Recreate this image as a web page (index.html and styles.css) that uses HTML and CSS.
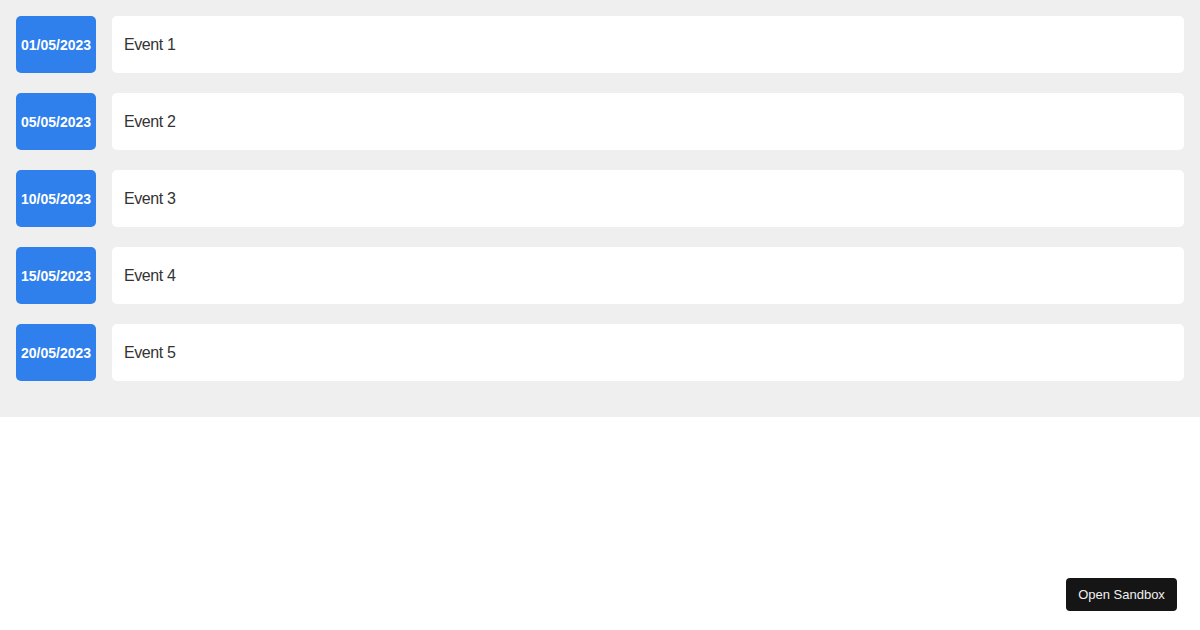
FILE: index.html
```html
<!DOCTYPE html>
<html>
<head>
<meta charset="utf-8">
<link rel="stylesheet" href="styles.css">
</head>
<body>
<div class="timeline">
  <div class="row"><div class="date">01/05/2023</div><div class="card">Event 1</div></div>
  <div class="row"><div class="date">05/05/2023</div><div class="card">Event 2</div></div>
  <div class="row"><div class="date">10/05/2023</div><div class="card">Event 3</div></div>
  <div class="row"><div class="date">15/05/2023</div><div class="card">Event 4</div></div>
  <div class="row"><div class="date">20/05/2023</div><div class="card">Event 5</div></div>
</div>
<a class="sandbox">Open Sandbox</a>
</body>
</html>
```
FILE: styles.css
```css
html, body {
  margin: 0;
  padding: 0;
  background: #ffffff;
  font-family: "Liberation Sans", Arial, sans-serif;
}
.timeline {
  background: #efefef;
  padding: 16px;
}
.row {
  display: flex;
  align-items: stretch;
  margin-bottom: 20px;
  height: 57px;
}
.date {
  width: 80px;
  flex: 0 0 80px;
  background: #2f80ed;
  color: #ffffff;
  font-weight: bold;
  font-size: 14px;
  border-radius: 5px;
  display: flex;
  align-items: center;
  justify-content: center;
}
.card {
  flex: 1;
  margin-left: 16px;
  background: #ffffff;
  border-radius: 5px;
  padding: 0 12px;
  display: flex;
  align-items: center;
  font-size: 16px;
  letter-spacing: -0.4px;
  color: #333333;
}
.sandbox {
  position: fixed;
  right: 23px;
  bottom: 19px;
  height: 33px;
  width: 111px;
  box-sizing: border-box;
  background: #151515;
  color: #f0f0f0;
  border-radius: 4px;
  font-size: 13px;
  display: flex;
  align-items: center;
  justify-content: center;
}
```
